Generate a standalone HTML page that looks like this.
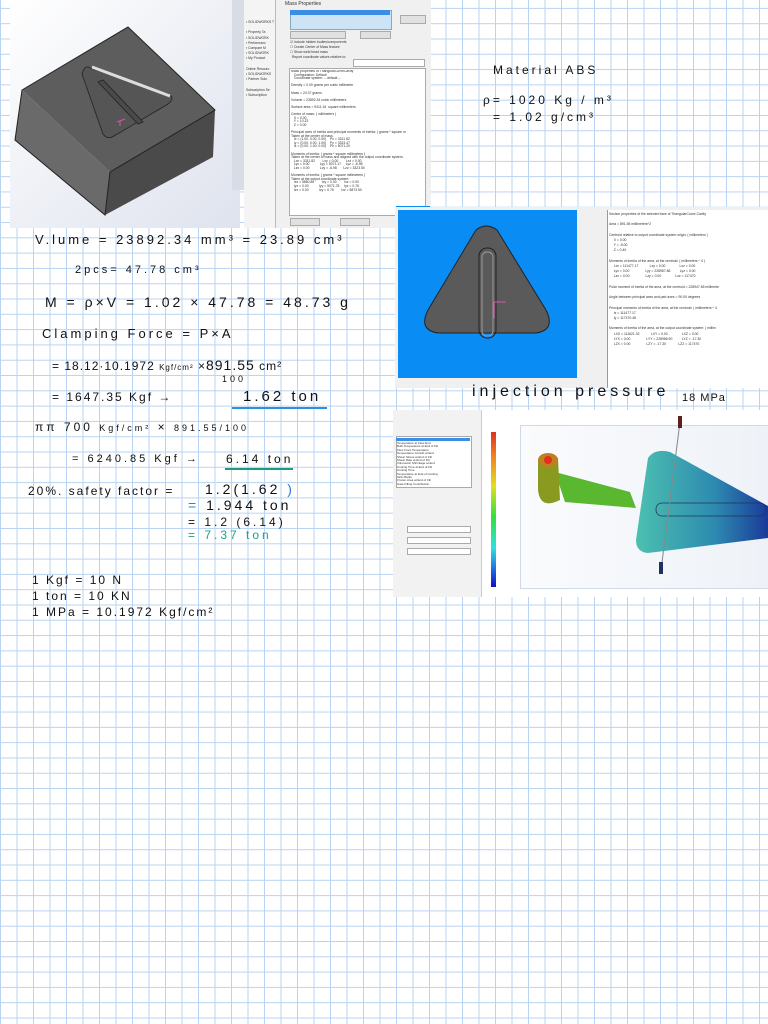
<!DOCTYPE html>
<html><head><meta charset="utf-8"><style>
body{margin:0;width:768px;height:1024px;overflow:hidden;background:#fff;position:relative;font-family:"Liberation Sans",sans-serif;}
.grid{position:absolute;inset:0;background-image:repeating-linear-gradient(to right,#b9d3f2 0,#b9d3f2 1px,transparent 1px,transparent 16.5px),repeating-linear-gradient(to bottom,transparent 0,transparent 8px,#b9d3f2 8px,#b9d3f2 9px,transparent 9px,transparent 15.3px);background-size:16.5px 100%,100% 15.3px;}
.a{position:absolute}
.h{position:absolute;font-family:"Liberation Sans",sans-serif;color:#111;font-size:13px;letter-spacing:3px;white-space:nowrap;}
.s{font-size:3.4px;color:#333;line-height:3.6px;white-space:pre;font-family:"Liberation Sans",sans-serif;overflow:hidden}
</style></head><body>
<div class="grid"></div>

<!-- top-left CAD screenshot -->
<div class="a" style="left:10px;top:0;width:230px;height:228px;background:linear-gradient(135deg,#fff 0%,#eef0f6 50%,#dfe3ee 100%)"></div>
<svg class="a" style="left:10px;top:0" width="230" height="228">
<polygon points="12,90 118,27 205,110 100,172" fill="#5d5d5d"/>
<polygon points="12,90 100,172 95,215 5,140" fill="#6a6a6a"/>
<polygon points="100,172 205,110 203,157 95,215" fill="#4a4a4a"/>
<polygon points="12,90 118,27 205,110 100,172 95,215 5,140" fill="none" stroke="#222" stroke-width="1"/>
<path d="M80,68 Q75,64 72,74 L93,134 Q97,140 104,136 L158,104 Q166,98 158,94 Z" fill="#555" stroke="#222" stroke-width="0.8"/>
<path d="M82,67 L160,96" stroke="#ddd" stroke-width="3"/>
<path d="M88,82 L128,124 L133,122 L93,80 Z" fill="#4a4a4a" stroke="#222" stroke-width="0.8"/>
<path d="M107,122 l8,-3 M110,126 l0,-5" stroke="#e050b0" stroke-width="1"/>
</svg>
<div class="a" style="left:232px;top:0;width:12px;height:190px;background:#d8dce4"></div>
<div class="a" style="left:244px;top:0;width:32px;height:228px;background:#f4f4f4"></div>
<div class="a s" style="left:246px;top:20px;width:29px;line-height:5.2px;font-size:3.4px">▪ SOLIDWORKS T

▪ Property Ta
▪ SOLIDWORK
▪ Performanc
▪ Compare M
▪ SOLIDWORK
▪ My Product

Online Resourc
▪ SOLIDWORKS
▪ Partner Solu

Subscription Se
▪ Subscription</div>
<div class="a" style="left:275px;top:0;width:155px;height:228px;background:#f0f0f0;border-left:1px solid #bbb"></div>
<div class="a s" style="left:285px;top:1px;font-size:5px;line-height:6px">Mass Properties</div>
<div class="a" style="left:290px;top:10px;width:100px;height:18px;background:#cde4f7;border:1px solid #8ab"></div>
<div class="a" style="left:290px;top:10px;width:100px;height:5px;background:#3a8ee6"></div>
<div class="a" style="left:400px;top:15px;width:24px;height:7px;background:#e1e1e1;border:1px solid #aaa"></div>
<div class="a" style="left:290px;top:31px;width:54px;height:6px;background:#e1e1e1;border:1px solid #aaa"></div>
<div class="a" style="left:360px;top:31px;width:29px;height:6px;background:#e1e1e1;border:1px solid #aaa"></div>
<div class="a s" style="left:290px;top:40px;line-height:5px">☑ Include hidden bodies/components
☐ Create Center of Mass feature
☐ Show weld bead mass
  Report coordinate values relative to: </div>
<div class="a" style="left:353px;top:59px;width:70px;height:6px;background:#fff;border:1px solid #aaa"></div>
<div class="a" style="left:289px;top:68px;width:135px;height:146px;background:#fff;border:1px solid #aaa"></div>
<div class="a s" style="left:291px;top:70px;width:132px;height:143px">Mass properties of TriangularCurveCavity
   Configuration: Default
   Coordinate system: -- default --

Density = 0.00 grams per cubic millimeter

Mass = 24.37 grams

Volume = 23892.34 cubic millimeters

Surface area = 9411.16  square millimeters

Center of mass: ( millimeters )
   X = 0.00
   Y = 10.23
   Z = 0.00

Principal axes of inertia and principal moments of inertia: ( grams * square m
Taken at the center of mass.
   Ix = (1.00, 0.00, 0.00)    Px = 3311.82
   Iy = (0.00, 0.00, 1.00)    Py = 3323.47
   Iz = (0.00, 1.00, 0.00)    Pz = 5071.20

Moments of inertia: ( grams * square millimeters )
Taken at the center of mass and aligned with the output coordinate system.
   Lxx = 3311.82        Lxy = 0.00        Lxz = 0.00
   Lyx = 0.00           Lyy = 5071.17     Lyz = -6.98
   Lzx = 0.00           Lzy = -6.98       Lzz = 3323.50

Moments of inertia: ( grams * square millimeters )
Taken at the output coordinate system.
   Ixx = 5860.89        Ixy = 0.00        Ixz = 0.00
   Iyx = 0.00           Iyy = 5071.78     Iyz = 0.76
   Izx = 0.00           Izy = 0.76        Izz = 5873.50</div>
<div class="a" style="left:290px;top:218px;width:28px;height:6px;background:#e1e1e1;border:1px solid #aaa"></div>
<div class="a" style="left:340px;top:218px;width:28px;height:6px;background:#e1e1e1;border:1px solid #aaa"></div>
<div class="a" style="left:396px;top:206px;width:34px;height:22px;background:#0a8cf5"></div>

<!-- Material notes -->
<div class="h" style="left:493px;top:63px;font-size:12px">Material  ABS</div>
<div class="h" style="left:483px;top:93px;font-size:12px">ρ= 1020  Kg / m³</div>
<div class="h" style="left:493px;top:110px;font-size:12px">= 1.02  g/cm³</div>

<!-- handwritten left -->
<div class="h" style="left:35px;top:232px">V.lume = 23892.34 mm³ = 23.89 cm³</div>
<div class="h" style="left:75px;top:264px;font-size:11px">2pcs= 47.78 cm³</div>
<div class="h" style="left:45px;top:294px;font-size:14px">M = ρ×V = 1.02 × 47.78 = 48.73 g</div>
<div class="h" style="left:42px;top:326px">Clamping Force = P×A</div>
<div class="h" style="left:52px;top:357px;font-size:12px;letter-spacing:1px">= 18.12·10.1972 <span style="font-size:8px">Kgf/cm²</span> ×<span style="font-size:14px">891.55</span> cm²</div>
<div class="h" style="left:222px;top:374px;font-size:9px">100</div>
<div class="h" style="left:52px;top:390px;font-size:12px;letter-spacing:2px">= 1647.35 Kgf  →</div>
<div class="h" style="left:243px;top:388px;font-size:15px">1.62 ton</div>
<div class="a" style="left:232px;top:407px;width:95px;height:2px;background:#2d8fe0"></div>
<div class="h" style="left:35px;top:420px;font-size:12px">ππ  700 <span style="font-size:9px">Kgf/cm²</span> × <span style="font-size:9px">891.55/100</span></div>
<div class="h" style="left:72px;top:453px;font-size:11px">= 6240.85 Kgf →</div>
<div class="h" style="left:226px;top:452px;font-size:12px">6.14   ton</div>
<div class="a" style="left:225px;top:468px;width:68px;height:1.5px;background:#1a9a80"></div>
<div class="h" style="left:28px;top:484px;font-size:12px;letter-spacing:2px">20%. safety factor =</div>
<div class="h" style="left:205px;top:481px;font-size:14px">1.2(1.62 <span style="color:#2a7ae0">)</span></div>
<div class="h" style="left:188px;top:497px;font-size:14px"><span style="color:#1a8ae0">=</span> 1.944 ton</div>
<div class="h" style="left:188px;top:515px;font-size:12px">= 1.2 (6.14)</div>
<div class="h" style="left:188px;top:528px;font-size:12px;color:#1aa090">=  7.37  ton</div>
<div class="h" style="left:32px;top:573px;font-size:12px;letter-spacing:2px">1 Kgf = 10 N</div>
<div class="h" style="left:32px;top:589px;font-size:12px;letter-spacing:2px">1 ton = 10 KN</div>
<div class="h" style="left:32px;top:605px;font-size:12px;letter-spacing:2px">1 MPa = 10.1972 Kgf/cm²</div>

<!-- section properties screenshot -->
<div class="a" style="left:395px;top:207px;width:373px;height:181px;background:#f0f0f0"></div>
<div class="a" style="left:398px;top:210px;width:179px;height:168px;background:#0a8cf5"></div>
<svg class="a" style="left:398px;top:210px" width="179" height="168">
<path d="M78,20 Q88,12 99,20 L148,100 Q158,120 138,123 L40,123 Q20,120 30,100 Z" fill="#5a5a5a" stroke="#222"/>
<rect x="81" y="38" width="17" height="90" rx="8" fill="none" stroke="#222"/>
<rect x="84" y="42" width="11" height="84" rx="5" fill="none" stroke="#999"/>
<path d="M96,92 H108 M96,92 V108" stroke="#e050b0"/>
</svg>
<div class="a" style="left:607px;top:210px;width:161px;height:178px;background:#fff;border-left:1px solid #999"></div>
<div class="a s" style="left:609px;top:212px;width:159px;height:170px;line-height:5.2px">Section properties of the selected face of TriangularCurve-Cavity

Area = 891.55 millimeters^2

Centroid relative to output coordinate system origin: ( millimeters )
     X = 0.00
     Y = -5.00
     Z = 0.40

Moments of inertia of the area, at the centroid: ( millimeters ^ 4 )
     Lxx = 111477.17            Lxy = 0.00               Lxz = 0.00
     Lyx = 0.00                 Lyy = 228967.86          Lyz = 0.00
     Lzx = 0.00                 Lzy = 0.00               Lzz = 117470

Polar moment of inertia of the area, at the centroid = 228947.65 millimete

Angle between principal axes and part axes = 90.00 degrees

Principal moments of inertia of the area, at the centroid: ( millimeters ^ 4
     Ix = 111477.17
     Iy = 117470.48

Moments of inertia of the area, at the output coordinate system: ( millim
     LXX = 111621.32            LXY = 0.00               LXZ = 0.00
     LYX = 0.00                 LYY = 228985.90          LYZ = -17.30
     LZX = 0.00                 LZY = -17.30             LZZ = 117470</div>

<div class="h" style="left:472px;top:383px;font-size:16px;letter-spacing:4px">injection  pressure</div>
<div class="h" style="left:682px;top:392px;font-size:11px;letter-spacing:1px">18 MPa</div>

<!-- simulation screenshot -->
<div class="a" style="left:393px;top:410px;width:375px;height:187px;background:#fff"></div>
<div class="a" style="left:393px;top:410px;width:88px;height:187px;background:#f2f2f2;border-right:1px solid #ccc"></div>
<div class="a" style="left:396px;top:436px;width:74px;height:50px;background:#fff;border:1px solid #aaa"></div>
<div class="a" style="left:396px;top:438px;width:74px;height:3px;background:#3a8ee6"></div>
<div class="a s" style="left:397px;top:442px;font-size:3px;line-height:3.4px;width:72px;height:44px">Temperature at Flow End
Bulk Temperature at End of Fill
Flow Front Temperature
Temperature Growth at End
Shear Stress at End of Fill
Shear Rate at End of Fill
Volumetric Shrinkage at End
Cooling Time at End of Fill
Cooling Time
Temperature at End of Cooling
Sink Marks
Frozen Area at End of Fill
Gate Filling Contribution</div>
<div class="a" style="left:407px;top:526px;width:62px;height:5px;background:#fff;border:1px solid #aaa"></div>
<div class="a" style="left:407px;top:537px;width:62px;height:5px;background:#fff;border:1px solid #aaa"></div>
<div class="a" style="left:407px;top:548px;width:62px;height:5px;background:#fff;border:1px solid #aaa"></div>
<div class="a" style="left:491px;top:432px;width:5px;height:155px;background:linear-gradient(#e03020,#f08020 15%,#e0e020 35%,#30e040 55%,#30e0e0 75%,#2060e0 90%,#1010c0)"></div>
<div class="a" style="left:520px;top:425px;width:248px;height:162px;border:1px solid #cfd8e8;background:linear-gradient(90deg,#fafbfd,#eef2f8)"></div>
<svg class="a" style="left:520px;top:410px" width="248" height="187">
<defs><linearGradient id="tg" x1="0" x2="1"><stop offset="0" stop-color="#4cc0b0"/><stop offset="0.6" stop-color="#2d8ab0"/><stop offset="1" stop-color="#1a3a9a"/></linearGradient></defs>
<path d="M35,62 L110,82 L116,98 L45,92 Z" fill="#5ab830"/>
<path d="M18,50 Q28,40 38,48 L40,90 Q20,100 18,80 Z" fill="#8a9a20"/>
<ellipse cx="28" cy="50" rx="10" ry="7" fill="#c08020"/>
<circle cx="28" cy="50" r="4" fill="#e03020"/>
<path d="M128,48 Q135,38 150,42 L248,96 L248,128 L128,143 Q116,142 116,130 Z" fill="url(#tg)"/>
<rect x="136" y="93" width="110" height="13" rx="6" fill="none" stroke="#235" stroke-width="0.8"/>
<path d="M160,12 L141,160" stroke="#888" stroke-width="1"/>
<rect x="158" y="6" width="4" height="12" fill="#602020"/>
<rect x="139" y="152" width="4" height="12" fill="#203060"/>
</svg>
</body></html>
